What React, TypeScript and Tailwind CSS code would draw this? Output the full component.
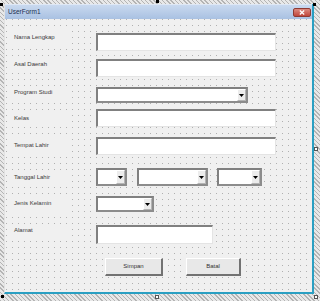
import React from "react";

const font = { fontFamily: '"Liberation Sans", Arial, sans-serif' };

function Label({ text, cls }: { text: string; cls: string }) {
  return (
    <div className="w-[86px] shrink-0">
      <div
        className={`w-[57px] h-[15px] bg-[#f0f0f0] pl-[4px] pt-[1px] text-[6px] leading-[10px] text-[#3a3a3a] whitespace-nowrap ${cls}`}
      >
        {text}
      </div>
    </div>
  );
}

function TextBox({ cls }: { cls: string }) {
  return (
    <div
      className={`bg-white border-t-2 border-l-2 border-t-[#808080] border-l-[#808080] border-r border-b border-r-[#e4e4e4] border-b-[#e4e4e4] ${cls}`}
    />
  );
}

function Arrow() {
  return (
    <svg width="5" height="3" viewBox="0 0 5 3">
      <polygon points="0,0 5,0 2.5,3" fill="#000" />
    </svg>
  );
}

function Combo({ cls }: { cls: string }) {
  return (
    <div
      className={`flex justify-end bg-white border-t-2 border-l-2 border-t-[#808080] border-l-[#808080] border-r-2 border-b-2 border-r-[#8c8c8c] border-b-[#8c8c8c] ${cls}`}
    >
      <div className="w-[9px] h-full flex items-center justify-center bg-[#ececec] border-t border-l border-t-white border-l-white border-r border-b border-r-[#b4b4b4] border-b-[#b4b4b4]">
        <Arrow />
      </div>
    </div>
  );
}

function Button({ text, cls }: { text: string; cls: string }) {
  return (
    <div
      className={`h-[18px] flex items-center justify-center bg-[#e8e8e8] border-t border-l border-t-white border-l-white border-r-2 border-b-2 border-r-[#727272] border-b-[#727272] text-[6px] text-[#333] ${cls}`}
    >
      {text}
    </div>
  );
}

export default function App() {
  return (
    <div
      style={font}
      className="relative w-[320px] h-[301px] pt-[4px] pl-[4px] pr-[6px] pb-[7px] bg-[#dcdcdc] bg-[image:repeating-linear-gradient(45deg,#b4b4b4_0px,#b4b4b4_1px,#e8e8e8_1px,#e8e8e8_3px)]"
    >
      <div className="w-[310px] h-[290px] flex flex-col border-r-2 border-b-2 border-r-[#2a9fc2] border-b-[#2a9fc2] border-l border-l-[#e2e2e2] overflow-hidden">
        {/* title bar */}
        <div className="h-[15px] shrink-0 flex items-start justify-between bg-[linear-gradient(to_bottom,#c9d9ef,#a9c1e2)] border-t border-t-[#dfe8f5]">
          <span className="pl-[3px] pt-[2px] text-[6.5px] leading-[10px] text-[#1d2f4f]">
            UserForm1
          </span>
          <div className="mt-[3px] mr-[1px] w-[18px] h-[9px] rounded-[2px] flex items-center justify-center bg-[linear-gradient(to_bottom,#dc8a80,#c0463b)] border border-[#8e3a33]">
            <svg width="6" height="5" viewBox="0 0 6 5">
              <path d="M0.8 0.6 L5.2 4.4 M5.2 0.6 L0.8 4.4" stroke="#fff" strokeWidth="1.3" />
            </svg>
          </div>
        </div>
        {/* body */}
        <div className="flex-1 pl-[5px] bg-[#f0f0f0] bg-[image:linear-gradient(to_right,#f0f0f0_5px,transparent_5px),linear-gradient(to_bottom,#f0f0f0_5px,#b0b0b0_5px)] bg-[length:6px_6px] bg-[position:2px_1px]">
          <div className="flex items-start h-[18px] mt-[14px]">
            <Label text="Nama Lengkap" cls="-mt-[2px]" />
            <TextBox cls="w-[180px] h-[18px]" />
          </div>
          <div className="flex items-start h-[18px] mt-[8px]">
            <Label text="Asal Daerah" cls="-mt-[1px]" />
            <TextBox cls="w-[180px] h-[18px]" />
          </div>
          <div className="flex items-start h-[16px] mt-[10px]">
            <Label text="Program Studi" cls="-mt-[1px]" />
            <Combo cls="w-[152px] h-[16px]" />
          </div>
          <div className="flex items-start h-[18px] mt-[6px]">
            <Label text="Kelas" cls="mt-[3px]" />
            <TextBox cls="w-[180px] h-[18px]" />
          </div>
          <div className="flex items-start h-[18px] mt-[10px]">
            <Label text="Tempat Lahir" cls="mt-[2px]" />
            <TextBox cls="w-[180px] h-[18px]" />
          </div>
          <div className="flex items-start h-[18px] mt-[13px]">
            <Label text="Tanggal Lahir" cls="mt-[3px]" />
            <Combo cls="w-[31px] h-[18px]" />
            <Combo cls="ml-[10px] w-[71px] h-[18px]" />
            <Combo cls="ml-[9px] w-[45px] h-[18px]" />
          </div>
          <div className="flex items-start h-[16px] mt-[10px]">
            <Label text="Jenis Kelamin" cls="mt-[1px]" />
            <Combo cls="w-[58px] h-[16px]" />
          </div>
          <div className="flex items-start h-[19px] mt-[13px]">
            <Label text="Alamat" cls="-mt-[1px]" />
            <TextBox cls="w-[117px] h-[19px]" />
          </div>
          <div className="flex items-start h-[18px] mt-[14px] pl-[95px]">
            <Button text="Simpan" cls="w-[58px]" />
            <Button text="Batal" cls="ml-[23px] w-[55px]" />
          </div>
        </div>
      </div>
      {/* selection handles */}
      <div className="absolute left-0 top-[3px] w-[3px] h-[3px] bg-black" />
      <div className="absolute left-[156px] top-0 w-[3px] h-[3px] bg-black" />
      <div className="absolute left-[313px] top-[3px] w-[3px] h-[3px] bg-black" />
      <div className="absolute left-[314px] top-[147px] w-[4px] h-[4px] bg-white border border-[#555]" />
      <div className="absolute left-[1px] top-[295px] w-[3px] h-[3px] bg-black" />
      <div className="absolute left-[155px] top-[295px] w-[4px] h-[4px] bg-white border border-[#555]" />
      <div className="absolute left-[314px] top-[295px] w-[4px] h-[4px] bg-white border border-[#555]" />
    </div>
  );
}
